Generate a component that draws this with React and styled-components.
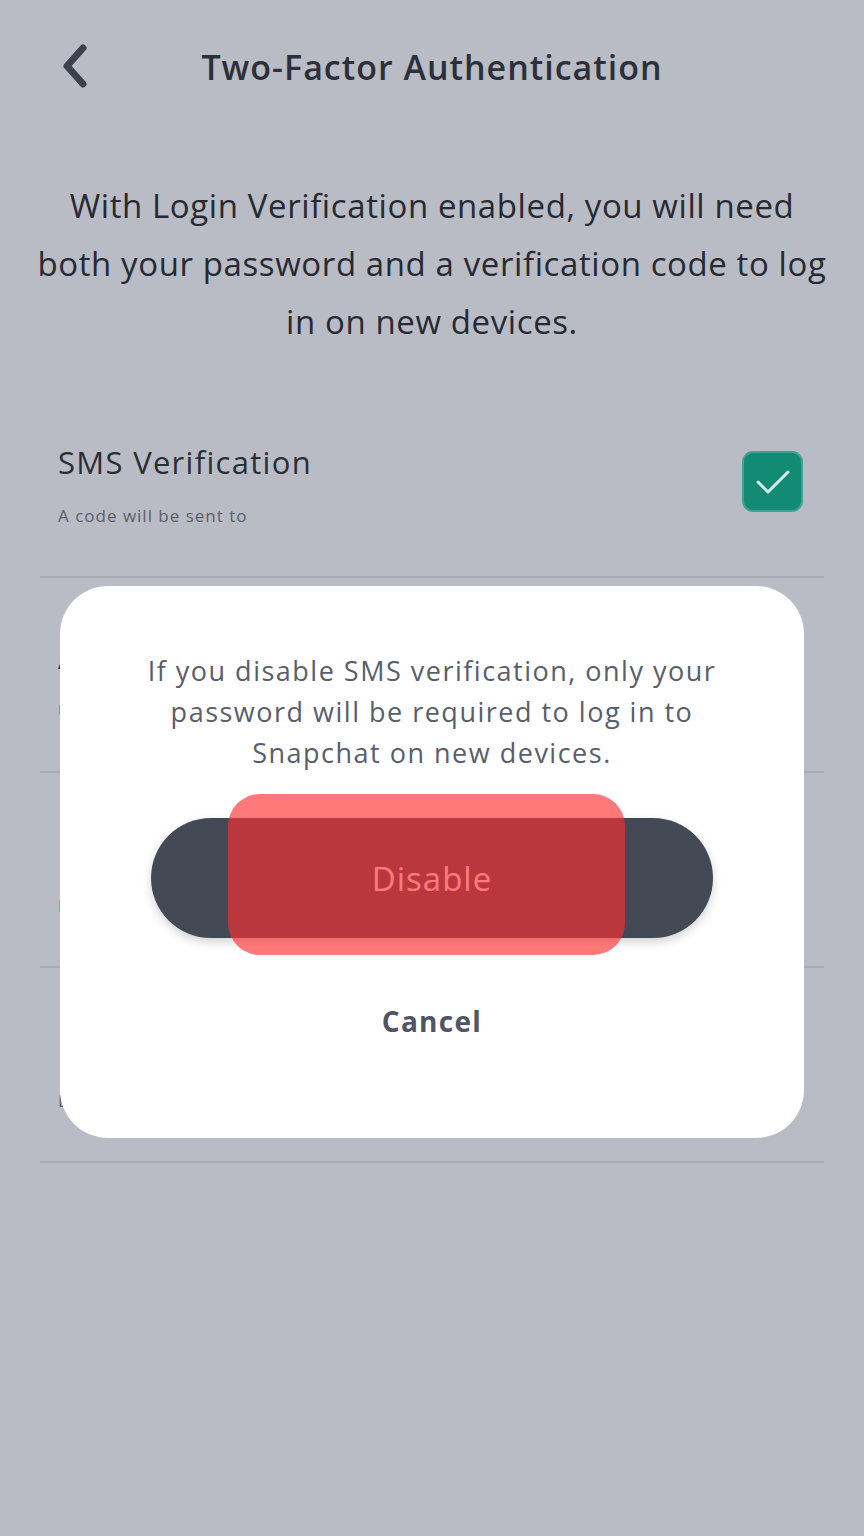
import React from "react";
import styled, { createGlobalStyle } from "styled-components";

const GlobalStyle = createGlobalStyle`
  html, body {
    margin: 0;
    padding: 0;
    background: #babcc5;
  }
  body {
    font-family: "Open Sans", "Noto Sans", sans-serif;
  }
`;

const Page = styled.div`
  position: relative;
  width: 864px;
  min-height: 1536px;
  background: #babcc5;
  overflow: hidden;
`;

const Header = styled.header`
  position: relative;
  height: 134px;
  display: flex;
  align-items: flex-start;
  justify-content: center;
`;

const BackButton = styled.button`
  position: absolute;
  left: 52px;
  top: 36px;
  width: 44px;
  height: 60px;
  padding: 0;
  border: none;
  background: none;
  display: flex;
  align-items: center;
  justify-content: center;
`;

const Title = styled.h1`
  margin: 46px 0 0;
  font-size: 34px;
  line-height: 42px;
  font-weight: 600;
  letter-spacing: 1px;
  color: #2c303b;
`;

const Intro = styled.p`
  margin: 43px 0 0;
  padding: 0 10px;
  text-align: center;
  font-size: 33px;
  line-height: 58px;
  letter-spacing: 0.6px;
  color: #262a33;
`;

const List = styled.ul`
  list-style: none;
  margin: 32px 40px 0;
  padding: 0;
`;

const Row = styled.li`
  height: 195px;
  box-sizing: border-box;
  border-bottom: 2px solid #a9abb4;
  padding: 60px 21px 0 18px;
  display: flex;
  justify-content: space-between;
  align-items: flex-start;
`;

const RowText = styled.div`
  display: flex;
  flex-direction: column;
  gap: 24px;
`;

const RowTitle = styled.span`
  font-size: 31px;
  line-height: 38px;
  letter-spacing: 1.3px;
  color: #2a2e37;
`;

const RowSub = styled.span`
  font-size: 17px;
  line-height: 22px;
  letter-spacing: 1px;
  color: #5b5f69;
`;

const Check = styled.span`
  margin-top: 8px;
  width: 61px;
  height: 61px;
  box-sizing: border-box;
  border-radius: 11px;
  background: #138a74;
  border: 2px solid #3fa393;
  display: flex;
  align-items: center;
  justify-content: center;
`;

const Modal = styled.div`
  position: absolute;
  left: 60px;
  top: 586px;
  width: 744px;
  height: 552px;
  box-sizing: border-box;
  background: #ffffff;
  border-radius: 48px;
  padding: 64px 0 0;
  display: flex;
  flex-direction: column;
  align-items: center;
`;

const ModalText = styled.p`
  margin: 0;
  text-align: center;
  font-size: 27px;
  line-height: 41px;
  letter-spacing: 1.5px;
  color: #595e69;
`;

const ButtonWrap = styled.div`
  position: relative;
  margin-top: 45px;
  width: 562px;
  height: 120px;
`;

const DarkButton = styled.button`
  width: 100%;
  height: 100%;
  border: none;
  border-radius: 60px;
  background: #434a56;
  color: #ffffff;
  font-family: inherit;
  font-size: 33px;
  letter-spacing: 1px;
  box-shadow: 0 4px 10px rgba(0, 0, 0, 0.18);
`;

const Highlight = styled.span`
  position: absolute;
  left: 77px;
  top: -24px;
  width: 397px;
  height: 161px;
  border-radius: 32px;
  background: rgba(253, 47, 47, 0.64);
  pointer-events: none;
`;

const CancelButton = styled.button`
  margin-top: 66px;
  border: none;
  background: none;
  padding: 0;
  font-family: inherit;
  font-size: 28px;
  line-height: 34px;
  font-weight: 700;
  letter-spacing: 1.3px;
  color: #4f5562;
`;

const rows = [
  { title: "Authenticator App", sub: "Use an authentication app to generate codes" },
  { title: "Forget Devices", sub: "Require a code on your other devices" },
  { title: "Recovery Code", sub: "Lets you log in if you lose your phone" },
];

const App = () => (
  <>
    <GlobalStyle />
    <Page>
      <Header>
        <BackButton aria-label="Back">
          <svg width="30" height="48" viewBox="0 0 30 48">
            <path
              d="M24 6 L8 24 L24 42"
              fill="none"
              stroke="#3c414d"
              strokeWidth="7"
              strokeLinecap="round"
              strokeLinejoin="round"
            />
          </svg>
        </BackButton>
        <Title>Two-Factor Authentication</Title>
      </Header>
      <Intro>
        With Login Verification enabled, you will need
        <br />
        both your password and a verification code to log
        <br />
        in on new devices.
      </Intro>
      <List>
        <Row>
          <RowText>
            <RowTitle>SMS Verification</RowTitle>
            <RowSub>A code will be sent to</RowSub>
          </RowText>
          <Check>
            <svg width="40" height="30" viewBox="0 0 40 30">
              <path
                d="M5 15 L15 25 L35 5"
                fill="none"
                stroke="#d7efe9"
                strokeWidth="3"
                strokeLinecap="round"
                strokeLinejoin="round"
              />
            </svg>
          </Check>
        </Row>
        {rows.map(({ title, sub }) => (
          <Row key={title}>
            <RowText>
              <RowTitle>{title}</RowTitle>
              <RowSub>{sub}</RowSub>
            </RowText>
          </Row>
        ))}
      </List>
      <Modal>
        <ModalText>
          If you disable SMS verification, only your
          <br />
          password will be required to log in to
          <br />
          Snapchat on new devices.
        </ModalText>
        <ButtonWrap>
          <DarkButton>Disable</DarkButton>
          <Highlight />
        </ButtonWrap>
        <CancelButton>Cancel</CancelButton>
      </Modal>
    </Page>
  </>
);

export default App;
